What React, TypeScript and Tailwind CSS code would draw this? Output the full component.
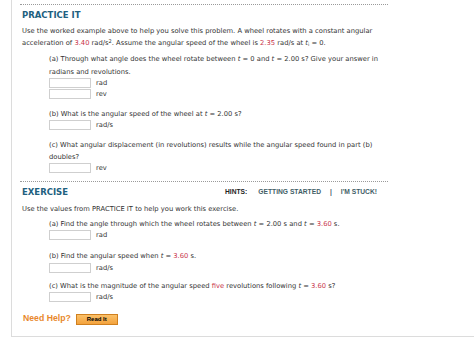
import React from "react";

const R = ({ children }: { children: React.ReactNode }) => (
  <span className="text-[#c8334a]">{children}</span>
);
const T = ({ children }: { children: React.ReactNode }) => (
  <span className="italic">{children}</span>
);

const Box = ({ unit, className = "" }: { unit: string; className?: string }) => (
  <div className={`flex items-center h-[10px] ${className}`}>
    <div className="w-[42px] h-[10px] border border-[#cfcfcf] bg-white" />
    <span className="ml-[5px] text-[6.75px] leading-[10px]">{unit}</span>
  </div>
);

const L = ({ children, className = "" }: { children: React.ReactNode; className?: string }) => (
  <div className={`h-[12px] leading-[12px] whitespace-nowrap ${className}`}>{children}</div>
);

export default function App() {
  return (
    <div
      className="w-[474px] h-[340px] bg-white overflow-hidden text-[#333]"
      style={{ fontFamily: '"DejaVu Sans", Verdana, sans-serif' }}
    >
      <div className="ml-[11px] h-[337px] border-l border-b border-[#dcdcdc] pl-[8px]">
        <div className="w-[368px] pt-[4px] text-[6.75px]">
          <div className="border-t border-dotted border-[#9a9a9a]" />
          <div className="pl-[2px] mt-[5px] h-[10px] text-[8.5px] leading-[10px] font-bold text-[#21607f]">
            PRACTICE IT
          </div>
          <div className="pl-[2px] mt-[5px]">
            <L>
              Use the worked example above to help you solve this problem. A wheel rotates with a constant angular
            </L>
            <L>
              acceleration of <R>3.40</R> rad/s<sup className="text-[5px]">2</sup>. Assume the angular speed of the wheel is{" "}
              <R>2.35</R> rad/s at <T>t</T>
              <sub className="text-[4.5px]">i</sub> = 0.
            </L>
          </div>
          <div className="pl-[29px] mt-[4px]">
            <L>
              (a) Through what angle does the wheel rotate between <T>t</T> = 0 and <T>t</T> = 2.00 s? Give your answer in
            </L>
            <L className="mt-[1px]">radians and revolutions.</L>
            <Box unit="rad" />
            <Box unit="rev" className="mt-[1px]" />
            <L className="mt-[9px]">
              (b) What is the angular speed of the wheel at <T>t</T> = 2.00 s?
            </L>
            <Box unit="rad/s" />
            <L className="mt-[9px]">
              (c) What angular displacement (in revolutions) results while the angular speed found in part (b)
            </L>
            <L>doubles?</L>
            <Box unit="rev" />
          </div>
          <div className="mt-[8px] border-t border-dotted border-[#9a9a9a]" />
          <div className="pl-[2px] mt-[5px] flex items-center h-[10px]">
            <span className="text-[8.5px] font-bold text-[#21607f]">EXERCISE</span>
            <div
              className="ml-auto flex items-center text-[6.7px] font-bold mr-[11px]"
              style={{ fontFamily: '"Liberation Sans", Arial, sans-serif' }}
            >
              <span className="text-[#222]">HINTS:</span>
              <span className="ml-[11px] text-[#3f5e66]">GETTING STARTED</span>
              <span className="ml-[9px] text-[#3f5e66]">|</span>
              <span className="ml-[9px] text-[#3f5e66]">I'M STUCK!</span>
            </div>
          </div>
          <L className="pl-[2px] mt-[6px]">
            Use the values from PRACTICE IT to help you work this exercise.
          </L>
          <div className="pl-[29px] mt-[3px]">
            <L>
              (a) Find the angle through which the wheel rotates between <T>t</T> = 2.00 s and <T>t</T> = <R>3.60</R> s.
            </L>
            <Box unit="rad" />
            <L className="mt-[10px]">
              (b) Find the angular speed when <T>t</T> = <R>3.60</R> s.
            </L>
            <Box unit="rad/s" className="mt-[1px]" />
            <L className="mt-[7px]">
              (c) What is the magnitude of the angular speed <R>five</R> revolutions following <T>t</T> = <R>3.60</R> s?
            </L>
            <Box unit="rad/s" />
          </div>
          <div className="pl-[3px] mt-[12px] flex items-center h-[10px]">
            <span
              className="text-[8.7px] font-bold text-[#e8882c]"
              style={{ fontFamily: '"Liberation Sans", Arial, sans-serif' }}
            >
              Need Help?
            </span>
            <button
              className="ml-[5px] w-[42px] h-[11px] border border-[#d0801f] bg-gradient-to-b from-[#fbc168] to-[#f3a23c] text-[6px] font-bold text-black leading-[9px]"
              style={{ fontFamily: '"Liberation Sans", Arial, sans-serif' }}
            >
              Read It
            </button>
          </div>
        </div>
      </div>
    </div>
  );
}
